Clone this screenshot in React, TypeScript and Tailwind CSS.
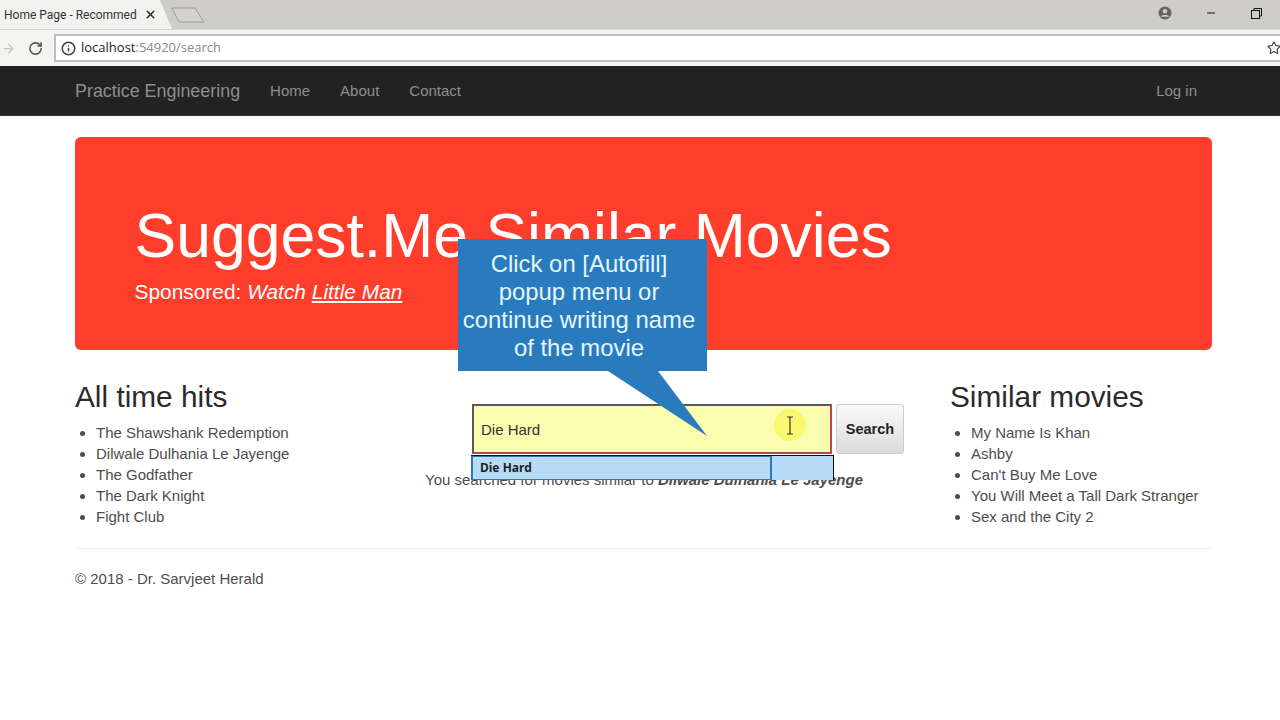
import { Info, Minus, RotateCw, ArrowRight, Star, X } from 'lucide-react';

const hits = ['The Shawshank Redemption', 'Dilwale Dulhania Le Jayenge', 'The Godfather', 'The Dark Knight', 'Fight Club'];
const similar = ['My Name Is Khan', 'Ashby', "Can't Buy Me Love", 'You Will Meet a Tall Dark Stranger', 'Sex and the City 2'];

function MovieList({ title, items }: { title: string; items: string[] }) {
  return (
    <div>
      <h2 className="text-[29.8px] leading-[33px] text-[#2b2b2b]">{title}</h2>
      <ul className="mt-[9px] list-disc pl-[21px] text-[15px] leading-[21px] text-[#4d4d4d]">
        {items.map((item) => (
          <li key={item}>{item}</li>
        ))}
      </ul>
    </div>
  );
}

function BrowserChrome() {
  return (
    <div className="h-[66px] font-['Open_Sans',sans-serif]">
      <div className="flex h-[29px] items-center justify-between bg-[#cfcdc8]">
        <div className="flex h-full items-center">
          <div className="flex h-full w-[172px] items-center justify-between bg-[#f2f2f0] pl-[4px] pr-[15px] [clip-path:polygon(0_0,160px_0,172px_29px,0_29px)]">
            <span className="whitespace-nowrap font-['Roboto',sans-serif] text-[12px] text-[#333]">Home Page - Recommed</span>
            <X className="h-[13px] w-[13px] text-[#333]" strokeWidth={3} />
          </div>
          <svg className="ml-[-1px] mt-[1px]" width="36" height="18" viewBox="0 0 36 18">
            <path d="M1 2 H24 L33 16 H8 Z" fill="#d4d2cd" stroke="#9d9c98" strokeWidth="1" />
          </svg>
        </div>
        <div className="flex items-center text-[#444]">
          <svg className="mb-[3px] mr-[33px]" width="14" height="14" viewBox="0 0 14 14">
            <circle cx="7" cy="7" r="6.5" fill="#66655f" />
            <circle cx="7" cy="5.2" r="2.2" fill="#cfcdc8" />
            <path d="M3 10.3 C4 8.4 10 8.4 11 10.3 L11 10.8 L3 10.8 Z" fill="#cfcdc8" />
          </svg>
          <Minus className="mb-[3px] mr-[34px] h-[12px] w-[12px] text-[#111]" />
          <svg className="mb-[3px] mr-[18px]" width="11" height="11" viewBox="0 0 11 11" fill="none" stroke="#111" strokeWidth="1">
            <rect x="0.5" y="2.5" width="8" height="8" />
            <path d="M3 2.5 V0.5 H10.5 V8 H8.5" />
          </svg>
        </div>
      </div>
      <div className="flex h-[37px] items-center border-t border-[#d8d6d0] bg-[#f3f3f1]">
        <ArrowRight className="ml-[1px] h-[15px] w-[15px] text-[#c4c4c4]" />
        <RotateCw className="ml-[12px] h-[15px] w-[15px] text-[#555]" strokeWidth={2.5} />
        <div className="ml-[11px] flex h-[28px] flex-1 items-center justify-between border-y-2 border-l-2 border-[#bdbdbd] bg-white pl-[5px]">
          <div className="flex items-center">
            <Info className="h-[15px] w-[15px] text-[#444]" strokeWidth={2.5} />
            <span className="ml-[5px] text-[13px] text-[#222]">
              localhost<span className="text-[#888]">:54920/search</span>
            </span>
          </div>
          <Star className="-mr-[1px] h-[14px] w-[14px] text-[#444]" strokeWidth={2} />
        </div>
      </div>
    </div>
  );
}

export default function App() {
  return (
    <div className="relative h-[720px] w-[1280px] overflow-hidden bg-white font-['Liberation_Sans',Arial,sans-serif]">
      <BrowserChrome />

      <nav className="flex h-[50px] items-center justify-between border-b border-[#333] bg-[#222] pl-[75px] pr-[83px] pt-[1px] text-[15px] text-[#8e8e8e]">
        <div className="flex items-center">
          <span className="text-[17.9px]">Practice Engineering</span>
          <span className="ml-[30px]">Home</span>
          <span className="ml-[30px]">About</span>
          <span className="ml-[30px]">Contact</span>
        </div>
        <span>Log in</span>
      </nav>

      <main className="px-[75px] pr-[68px] pt-[21px]">
        <section className="h-[213px] rounded-[6px] bg-[#ff3d2b] pl-[59.5px] pt-[60px] text-white">
          <h1 className="text-[62.5px] leading-[76px]">Suggest.Me Similar Movies</h1>
          <p className="mt-[4px] text-[20.9px] leading-[30px]">
            Sponsored: <em>Watch <u>Little Man</u></em>
          </p>
        </section>

        <div className="mt-[30px] flex">
          <div className="w-[277px]">
            <MovieList title="All time hits" items={hits} />
          </div>
          <div className="w-[598px] pt-[24px]">
            <div className="flex pl-[120px]">
              <div className="flex h-[50px] w-[360px] items-center border-2 border-t-[#5f5560] border-r-[#b84c50] border-b-[#a84c55] border-l-[#5f5560] bg-[#fafdad] pl-[7px] pt-[2px] text-[15px] text-[#333]">
                Die Hard
              </div>
              <div className="ml-[4px] flex h-[50px] w-[68px] items-center justify-center rounded-[3px] border border-[#ccc] bg-gradient-to-b from-[#fafafa] to-[#dcdcdc] pt-[2px] text-[14.5px] font-bold text-[#222]">
                Search
              </div>
            </div>
            <p className="mt-[16px] w-[584px] text-center text-[15px] leading-[20px] text-[#4d4d4d]">
              You searched for movies similar to <strong><em>Dilwale Dulhania Le Jayenge</em></strong>
            </p>
          </div>
          <div className="flex-1">
            <MovieList title="Similar movies" items={similar} />
          </div>
        </div>

        <hr className="mt-[21px] border-[#eee]" />
        <p className="mt-[19px] text-[15px] text-[#4d4d4d]">© 2018 - Dr. Sarvjeet Herald</p>
      </main>

      {/* autocomplete popup over the results line */}
      <div className="absolute left-[471px] top-[455px] flex h-[25px] w-[363px] border-r border-t border-[#111] bg-[#b8dcf5] text-[12px] font-bold text-[#222]">
        <div className="flex h-full w-[301px] items-center border-y border-l-2 border-r-2 border-[#2a7ab8] pl-[7px] font-['Noto_Sans',sans-serif]">Die Hard</div>
      </div>

      {/* callout */}
      <div className="absolute left-[458px] top-[239px] flex h-[132px] w-[249px] items-start justify-center bg-[#2a7bbd] pr-[7px] pt-[11px] text-center text-[23.9px] leading-[28px] text-[#e4f6fb]">
        <span className="w-[240px]">Click on [Autofill] popup menu or continue writing name of the movie</span>
      </div>
      <svg className="absolute left-[600px] top-[370px]" width="110" height="70" viewBox="0 0 110 70">
        <polygon points="8,1 58,1 107,66" fill="#2a7bbd" />
      </svg>

      {/* cursor highlight */}
      <div className="absolute left-[774px] top-[409px] h-[32px] w-[32px] rounded-full bg-[#f9f76a] opacity-90" />
      <svg className="absolute left-[785px] top-[416px]" width="10" height="19" viewBox="0 0 10 19" fill="none" stroke="#333" strokeWidth="1.2">
        <path d="M2 1 H8 M5 1 V18 M2 18 H8" />
      </svg>
    </div>
  );
}
